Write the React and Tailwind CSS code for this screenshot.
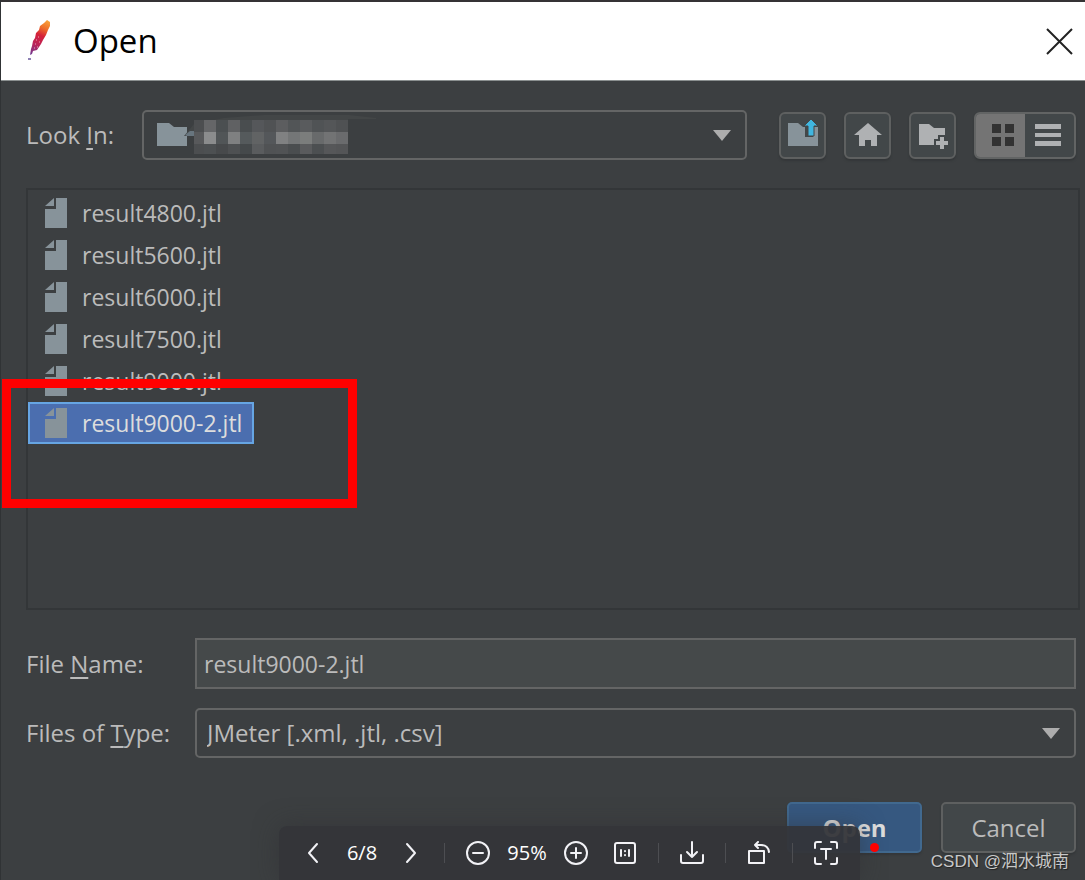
/**
 * File chooser dialog, shown inside an image viewer
 */

import React, { useState } from 'react';

const FILES = [
  'result4800.jtl',
  'result5600.jtl',
  'result6000.jtl',
  'result7500.jtl',
  'result9000.jtl',
  'result9000-2.jtl',
];

// Grey levels of the mosaic over the folder name, one row per line
const MOSAIC = [
  ['#4c4e50', '#656668', '#4b4f51', '#606163', '#494d4f', '#55575a', '#505254', '#5c5d5f', '#525557', '#595b5d', '#505355', '#545658', '#4f5153'],
  ['#58595b', '#8b8c8d', '#515557', '#7f8081', '#555a5c', '#616364', '#54575a', '#808182', '#747677', '#7b7d7c', '#686a6b', '#727374', '#6a6b6d'],
  ['#4c4e50', '#4d5052', '#47494b', '#4e5052', '#45494b', '#5a5c5e', '#505254', '#515355', '#4a4d4f', '#5a5b5d', '#4c4f51', '#565759', '#545557'],
];

const iconButton =
  'flex h-[47px] w-[47px] items-center justify-center rounded-md border-2 border-[#5e6060] bg-[#424749] shadow-[0_2px_2px_#343739]';
const comboBox =
  'h-[50px] w-full appearance-none rounded-[5px] border-2 border-[#646565] bg-[#3c3f41] px-[10px] text-[24px] text-[#bbbbbb] outline-none';

function FeatherIcon() {
  return (
    <svg width="24" height="42" viewBox="0 0 24 42" aria-hidden="true">
      <defs>
        <linearGradient id="feather" x1="20" y1="1" x2="4" y2="36" gradientUnits="userSpaceOnUse">
          <stop offset="0" stopColor="#f9a13a" />
          <stop offset="0.22" stopColor="#ee6c28" />
          <stop offset="0.42" stopColor="#d4213a" />
          <stop offset="0.7" stopColor="#b8235c" />
          <stop offset="1" stopColor="#6c3d97" />
        </linearGradient>
      </defs>
      <path
        d="M19 0L16 3L12 6L11 10L8 13L7 18L5 21L4 26L3 29L2 35L4 34L5 31L9 30L11 27L13 24L15 20L18 15L20 10L22 6L22 2Z"
        fill="url(#feather)"
      />
      <path d="M8 20h1M11 22h1M7 24h1M9 27h1M6 28h1M10 17h1" stroke="#fff" strokeOpacity="0.6" strokeWidth="1" />
      <rect x="0" y="38" width="3" height="2" fill="#8d80b4" />
    </svg>
  );
}

function FileIcon() {
  return (
    <svg width="22" height="30" viewBox="0 0 22 30" className="shrink-0" aria-hidden="true">
      <path d="M11 0H22V30H0V11H11Z" fill="#87939a" />
      <path d="M9 0V8H0Z" fill="#87939a" />
    </svg>
  );
}

function ComboArrow() {
  return (
    <svg
      width="20"
      height="12"
      viewBox="0 0 20 12"
      className="pointer-events-none absolute right-[15px] top-5"
      aria-hidden="true"
    >
      <path d="M1 0H19L10 11Z" fill="#adadad" />
    </svg>
  );
}

function FolderMosaic() {
  return (
    <svg
      width="240"
      height="46"
      viewBox="0 0 240 46"
      className="pointer-events-none absolute left-[2px] top-[2px]"
      aria-hidden="true"
    >
      <path d="M13 11H25L30 15H43V34H13Z" fill="#87939a" />
      <path d="M40 24L50 12L80 6L120 3L205 3L232 6V7H204V41H76L50 37V24Z" fill="#434647" />
      <path d="M41 23L46 19H50V24H43Z" fill="#68757e" />
      {MOSAIC.map((row, y) =>
        row.map((fill, x) => (
          <rect
            key={`${x}-${y}`}
            x={x === 0 ? 50 : 48 + x * 12}
            y={8 + y * 12}
            width={x === 0 ? 10 : 12}
            height={y === 2 ? 10 : 12}
            fill={fill}
          />
        ))
      )}
    </svg>
  );
}

function ViewerIcon({ children }) {
  return (
    <svg
      width="24"
      height="24"
      viewBox="0 0 24 24"
      fill="none"
      stroke="#f2f2f6"
      strokeWidth="2"
      strokeLinecap="round"
      strokeLinejoin="round"
      aria-hidden="true"
    >
      {children}
    </svg>
  );
}

function Divider() {
  return <span className="mx-[21px] h-5 w-px bg-[#4d4e52]" />;
}

function ViewerToolbar() {
  return (
    <div className="absolute bottom-0 left-[278px] flex h-[54px] items-center rounded-t-lg bg-[#343539]/95 px-[22px] text-[20px] text-white shadow-[0_0_24px_rgba(48,48,50,0.5)]">
      <button type="button" aria-label="Previous">
        <ViewerIcon><path d="M16 3L8 12L16 21" /></ViewerIcon>
      </button>
      <span className="w-[74px] text-center">6/8</span>
      <button type="button" aria-label="Next">
        <ViewerIcon><path d="M8 3L16 12L8 21" /></ViewerIcon>
      </button>
      <Divider />
      <button type="button" aria-label="Zoom out">
        <ViewerIcon><circle cx="12" cy="12" r="11" /><path d="M7 12H17" /></ViewerIcon>
      </button>
      <span className="w-[74px] text-center">95%</span>
      <button type="button" aria-label="Zoom in">
        <ViewerIcon><circle cx="12" cy="12" r="11" /><path d="M7 12H17M12 7V17" /></ViewerIcon>
      </button>
      <button type="button" aria-label="Original size" className="ml-[25px]">
        <ViewerIcon>
          <rect x="2" y="2" width="20" height="20" rx="2" />
          <path d="M8 9V15M16 9V15M12 10V10.2M12 14V14.2" />
        </ViewerIcon>
      </button>
      <Divider />
      <button type="button" aria-label="Download">
        <ViewerIcon><path d="M12 1V16M7 11L12 16L17 11M1 14V20Q1 22 3 22H21Q23 22 23 20V14" /></ViewerIcon>
      </button>
      <Divider />
      <button type="button" aria-label="Rotate">
        <ViewerIcon><path d="M2 10H17V22H2ZM11 1L8 4L11 7M8 4H14Q21 4 22 11" /></ViewerIcon>
      </button>
      <Divider />
      <button type="button" aria-label="Recognize text">
        <ViewerIcon>
          <path d="M1 7V3Q1 1 3 1H7M17 1H21Q23 1 23 3V7M23 17V21Q23 23 21 23H17M7 23H3Q1 23 1 21V17M7 8H17M12 8V18" />
        </ViewerIcon>
      </button>
    </div>
  );
}

function App() {
  const [selected, setSelected] = useState('result9000-2.jtl');

  return (
    <div className="relative flex min-h-screen flex-col overflow-hidden border-l border-[#303335] bg-[#3c3f41] font-['Open_Sans','Noto_Sans_CJK_SC',sans-serif] text-[23px] leading-8 text-[#bbbbbb]">
      {/* Title bar */}
      <header className="flex h-[81px] items-center justify-between border-b border-t-2 border-b-[#8b9090] border-t-[#353335] bg-white pl-[27px] pr-3 text-black">
        <div className="flex items-center gap-[21px]">
          <FeatherIcon />
          <h1 className="text-[33px] leading-10">Open</h1>
        </div>
        <button type="button" aria-label="Close">
          <svg width="27" height="27" viewBox="0 0 27 27" aria-hidden="true">
            <path d="M1 1L26 26M26 1L1 26" stroke="#222" strokeWidth="2" />
          </svg>
        </button>
      </header>

      <main className="flex flex-1 flex-col pb-[27px] pl-[25px] pr-[5px] pt-[29px]">
        {/* Folder row */}
        <div className="flex items-center pr-1">
          <label htmlFor="look-in" className="w-[116px] shrink-0 text-[24px]">
            Look <span className="underline decoration-2 underline-offset-4 [text-decoration-skip-ink:none]">I</span>n:
          </label>
          <div className="relative flex-1">
            <select id="look-in" className={comboBox}>
              <option value="" aria-label="Current folder"></option>
            </select>
            <FolderMosaic />
            <ComboArrow />
          </div>
          <div className="ml-8 flex gap-[18px]">
            <button type="button" aria-label="Up one level" className={iconButton}>
              <svg width="32" height="32" viewBox="0 0 32 32" aria-hidden="true">
                <path d="M1 4H11L16 8H18V18H26V8H31V27H1Z" fill="#87939a" />
                <path d="M24 0L31 7H27V17H21V7H17Z" fill="#40b6e0" stroke="#424749" strokeWidth="1" />
              </svg>
            </button>
            <button type="button" aria-label="Home" className={iconButton}>
              <svg width="30" height="26" viewBox="0 0 30 26" aria-hidden="true">
                <path d="M15 1L29 13H24V24H18V18H12V24H6V13H1Z" fill="#afb1b3" />
              </svg>
            </button>
            <button type="button" aria-label="New folder" className={iconButton}>
              <svg width="32" height="30" viewBox="0 0 32 30" aria-hidden="true">
                <path d="M2 4H12L17 8H28V15H21V19H17V25H2Z" fill="#afb1b3" />
                <path d="M23 17H27V21H31V25H27V29H23V25H19V21H23Z" fill="#afb1b3" />
              </svg>
            </button>
            <div className="flex h-[47px] w-[102px] overflow-hidden rounded-md border-2 border-[#626464] bg-[#424749] shadow-[0_2px_2px_#343739]">
              <button type="button" aria-label="List" className="flex w-1/2 items-center justify-center bg-[#747474]">
                <svg width="22" height="22" viewBox="0 0 22 22" className="ml-1" aria-hidden="true">
                  <path d="M0 0H9V9H0ZM13 0H22V9H13ZM0 13H9V22H0ZM13 13H22V22H13Z" fill="#323232" />
                </svg>
              </button>
              <button type="button" aria-label="Details" className="flex w-1/2 items-center justify-center">
                <svg width="26" height="22" viewBox="0 0 26 22" className="mr-1" aria-hidden="true">
                  <path d="M0 0H26V5H0ZM0 9H26V13H0ZM0 17H26V22H0Z" fill="#afb1b3" />
                </svg>
              </button>
            </div>
          </div>
        </div>

        {/* File list */}
        <ul className="mt-7 flex flex-1 flex-col items-start border-2 border-[#333638] pt-0.5">
          {FILES.map((name) => (
            <li key={name}>
              <button
                type="button"
                onClick={() => setSelected(name)}
                className={`flex h-[42px] items-center gap-[15px] border-2 pl-[15px] pr-[10px] ${
                  name === selected ? 'border-[#66a5e3] bg-[#4b6eaf] text-[#dddddd]' : 'border-transparent'
                }`}
              >
                <FileIcon />
                {name}
              </button>
            </li>
          ))}
        </ul>

        {/* Name and type */}
        <div className="mt-7 flex items-center pr-1">
          <label htmlFor="file-name" className="w-[169px] shrink-0 text-[24px]">
            File <span className="underline decoration-2 underline-offset-4 [text-decoration-skip-ink:none]">N</span>ame:
          </label>
          <input
            id="file-name"
            type="text"
            value={selected}
            onChange={(e) => setSelected(e.target.value)}
            className="h-[51px] min-w-0 flex-1 border-2 border-[#646565] bg-[#45494a] px-[7px] outline-none"
          />
        </div>
        <div className="mt-[19px] flex items-center pr-1">
          <label htmlFor="file-type" className="w-[169px] shrink-0 text-[24px]">
            Files of <span className="underline decoration-2 underline-offset-4 [text-decoration-skip-ink:none]">T</span>ype:
          </label>
          <div className="relative flex-1">
            <select id="file-type" className={comboBox}>
              <option>JMeter [.xml, .jtl, .csv]</option>
            </select>
            <ComboArrow />
          </div>
        </div>

        {/* Actions */}
        <div className="mt-11 flex justify-end gap-[19px] pr-1">
          <button
            type="button"
            className="h-[51px] w-[135px] rounded-[5px] border-2 border-[#41698f] bg-[#365880] text-[24px] font-bold text-[#dddddd] shadow-[0_2px_2px_#343739]"
          >
            Open
          </button>
          <button
            type="button"
            className="h-[51px] w-[135px] rounded-[5px] border-2 border-[#5e6060] bg-[#424749] text-[24px] shadow-[0_2px_2px_#343739]"
          >
            Cancel
          </button>
        </div>
      </main>

      <ViewerToolbar />

      {/* Annotations */}
      <div className="pointer-events-none absolute left-px top-[379px] h-[129px] w-[355px] border-[9px] border-[#ff0000]" />
      <div className="pointer-events-none absolute bottom-7 right-[206px] h-[9px] w-[9px] rounded-full bg-[#ff0000]" />
      <p className="absolute bottom-[6px] right-4 font-['Liberation_Sans','Noto_Sans_CJK_SC',sans-serif] text-[17px] leading-6 text-[#c8c8c8] [text-shadow:1px_1px_1px_#222]">
        CSDN @泗水城南
      </p>
    </div>
  );
}

export default App;
